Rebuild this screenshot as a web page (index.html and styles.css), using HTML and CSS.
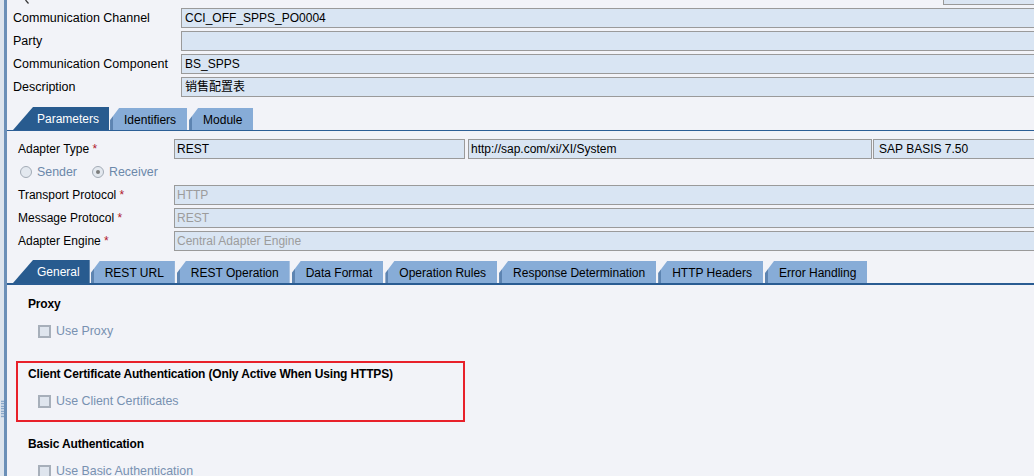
FILE: index.html
```html
<!DOCTYPE html>
<html>
<head>
<meta charset="utf-8">
<link rel="stylesheet" href="styles.css">
</head>
<body>
<div class="page">
  <div class="gutter"><div class="grip"></div></div>
  <div class="rail"></div>
  <div class="main">
    <div class="topbar">
      <svg class="topicon" width="6" height="4" viewBox="0 0 6 4"><path d="M0.5 0 L3.5 3.5" stroke="#333" stroke-width="1.2" fill="none"/></svg>
      <div class="topbox"></div>
    </div>

    <div class="head-fields">
      <div class="frow"><span class="lbl">Communication Channel</span><div class="inp">CCI_OFF_SPPS_PO0004</div></div>
      <div class="frow"><span class="lbl">Party</span><div class="inp"></div></div>
      <div class="frow"><span class="lbl">Communication Component</span><div class="inp">BS_SPPS</div></div>
      <div class="frow"><span class="lbl">Description</span><div class="inp">销售配置表</div></div>
    </div>

    <div class="tabs tabs-top">
      <div class="tab active tab-params">Parameters</div>
      <div class="tab">Identifiers</div>
      <div class="tab">Module</div>
    </div>

    <div class="params">
      <div class="frow">
        <span class="lbl">Adapter Type <span class="req">*</span></span>
        <div class="inp inp-type">REST</div>
        <div class="inp inp-ns">http://sap.com/xi/XI/System</div>
        <div class="inp inp-swc">SAP BASIS 7.50</div>
      </div>
      <div class="radios">
        <span class="radio"></span><span class="rtext">Sender</span>
        <span class="radio on"></span><span class="rtext">Receiver</span>
      </div>
      <div class="frow"><span class="lbl">Transport Protocol <span class="req">*</span></span><div class="inp dis">HTTP</div></div>
      <div class="frow"><span class="lbl">Message Protocol <span class="req">*</span></span><div class="inp dis">REST</div></div>
      <div class="frow"><span class="lbl">Adapter Engine <span class="req">*</span></span><div class="inp dis">Central Adapter Engine</div></div>
    </div>

    <div class="tabs tabs-sub">
      <div class="tab active tab-general">General</div>
      <div class="tab">REST URL</div>
      <div class="tab">REST Operation</div>
      <div class="tab">Data Format</div>
      <div class="tab">Operation Rules</div>
      <div class="tab">Response Determination</div>
      <div class="tab">HTTP Headers</div>
      <div class="tab">Error Handling</div>
    </div>

    <div class="sections">
      <div class="section">
        <div class="sec-title">Proxy</div>
        <div class="check"><span class="box"></span>Use Proxy</div>
      </div>
      <div class="section marked">
        <div class="sec-title">Client Certificate Authentication (Only Active When Using HTTPS)</div>
        <div class="check"><span class="box"></span>Use Client Certificates</div>
      </div>
      <div class="section">
        <div class="sec-title">Basic Authentication</div>
        <div class="check"><span class="box"></span>Use Basic Authentication</div>
      </div>
    </div>
  </div>
</div>
</body>
</html>
```

FILE: styles.css
```css
html, body {
  margin: 0;
  padding: 0;
  background: #f2f3f8;
  font-family: "Liberation Sans", Arial, "Noto Sans CJK SC", sans-serif;
  font-size: 12px;
  color: #000;
}

.page {
  display: flex;
  width: 1034px;
  height: 476px;
  overflow: hidden;
}

.gutter {
  width: 4px;
  flex: none;
  background: #dde4ed;
  display: flex;
  flex-direction: column;
}

.grip {
  flex: none;
  margin-top: 400px;
  margin-left: 1px;
  width: 3px;
  height: 18px;
  background-image: radial-gradient(circle, #6f94bd 0.8px, transparent 1px);
  background-size: 2px 2.5px;
}

.rail {
  width: 3px;
  flex: none;
  background: #6b8fb7;
}

.main {
  flex: 1;
  min-width: 0;
  display: flex;
  flex-direction: column;
}

.main > * {
  flex-shrink: 0;
}

/* top strip */
.topbar {
  height: 8px;
  display: flex;
  align-items: flex-start;
}

.topicon {
  margin-left: 18px;
}

.topbox {
  margin-left: auto;
  width: 90px;
  height: 4px;
  border-left: 1px solid #999;
  border-bottom: 1px solid #999;
  background: #dbe5f2;
}

/* field rows */
.head-fields {
  display: flex;
  flex-direction: column;
  gap: 3px;
  padding-left: 6px;
}

.frow {
  display: flex;
  align-items: center;
  height: 20px;
  flex-shrink: 0;
}

.head-fields .lbl {
  width: 168px;
  flex: none;
  font-size: 12.5px;
}

.params .lbl {
  width: 156px;
  flex: none;
}

.req {
  color: #b0172c;
}

.inp {
  flex: 1;
  height: 20px;
  box-sizing: border-box;
  border: 1px solid #9a9a9a;
  border-right: none;
  background: #d9e5f3;
  padding-left: 3px;
  line-height: 18px;
  white-space: nowrap;
  overflow: hidden;
}

.inp.dis {
  color: #9c9c9c;
  padding-left: 2px;
}

.inp-type {
  flex: none;
  width: 291px;
  border-right: 1px solid #9a9a9a;
  padding-left: 2px;
}

.inp-ns {
  flex: none;
  width: 404px;
  margin-left: 3px;
  border-right: 1px solid #9a9a9a;
  padding-left: 2px;
}

.inp-swc {
  margin-left: 1px;
  padding-left: 5px;
}

/* tabs */
.tabs {
  display: flex;
  align-items: flex-end;
  padding-left: 6px;
  height: 23px;
}

.tabs-top {
  margin-top: 10px;
  border-bottom: 1px solid #2c5f96;
}

.tabs-sub {
  margin-top: 9px;
  border-bottom: 2px solid #2a5c92;
}

.tab {
  height: 22px;
  box-sizing: border-box;
  display: flex;
  align-items: center;
  padding: 1px 11px 0 14px;
  margin-right: 2px;
  white-space: nowrap;
  color: #000;
  background: linear-gradient(to right, #5d84b1 0, #5d84b1 3px, #87acd7 3px);
  clip-path: polygon(0 100%, 0 55%, 9px 0, 100% 0, 100% 100%);
}

.tab.active {
  height: 23px;
  color: #fff;
  background: #285b8f;
  padding: 0 10px 0 24px;
  margin-right: 1px;
  clip-path: polygon(0 100%, 20px 0, 100% 0, 100% 100%);
}

.tab-general {
  padding-left: 25px;
  margin-right: 2px;
}

/* parameters */
.params {
  padding: 8px 0 0 11px;
  display: flex;
  flex-direction: column;
  gap: 3px;
}

.radios {
  height: 20px;
  flex-shrink: 0;
  margin: 0 0 0 2px;
  padding: 0;
  display: flex;
  align-items: center;
  color: #6c88aa;
  font-size: 12.4px;
}

.radio {
  width: 12px;
  height: 12px;
  box-sizing: border-box;
  border: 1px solid #a3abb6;
  border-radius: 50%;
  background: #e3e8ef;
  margin-right: 5px;
  position: relative;
}

.radio.on::after {
  content: "";
  position: absolute;
  left: 3px;
  top: 3px;
  width: 4px;
  height: 4px;
  border-radius: 50%;
  background: #7c7c7c;
}

.rtext {
  margin-right: 15px;
}

/* sections */
.sections {
  margin-top: 6px;
  padding-left: 9px;
  display: flex;
  flex-direction: column;
}

.section {
  width: 449px;
  flex-shrink: 0;
  box-sizing: border-box;
  border: 2px solid transparent;
  padding: 3px 10px 11px;
  margin-bottom: 9px;
}

.section.marked {
  border-color: #e8202a;
}

.sec-title {
  font-weight: bold;
  line-height: 16px;
  white-space: nowrap;
  letter-spacing: -0.15px;
}

.check {
  margin-top: 11px;
  padding-left: 10px;
  line-height: 16px;
  display: flex;
  align-items: center;
  color: #7891b1;
  font-size: 12.4px;
}

.box {
  width: 13px;
  height: 13px;
  box-sizing: border-box;
  border: 2px solid #a7afba;
  background: #dfe5ee;
  margin-right: 5px;
}
```
